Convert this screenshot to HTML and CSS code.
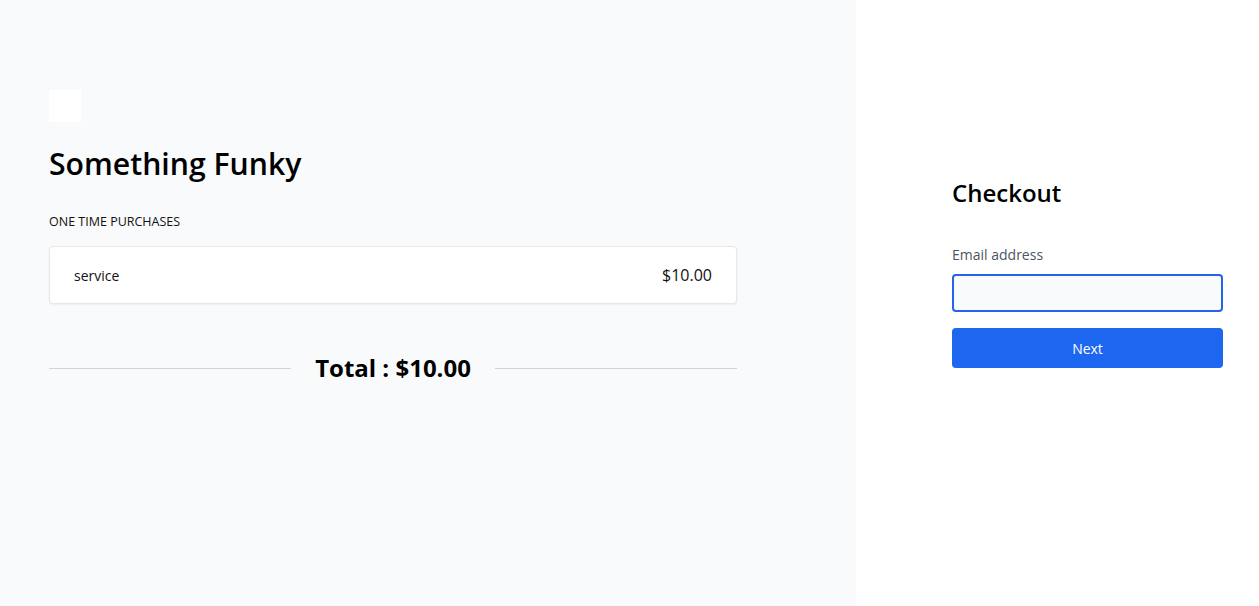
FILE: index.html
```html
<!DOCTYPE html>
<html>
<head>
<meta charset="utf-8">
<link rel="stylesheet" href="styles.css">
</head>
<body>
<div class="page">
  <section class="summary">
    <div class="logo"></div>
    <h1 class="title">Something Funky</h1>
    <div class="section-label">ONE TIME PURCHASES</div>
    <div class="card">
      <span class="item-name">service</span>
      <span class="item-price">$10.00</span>
    </div>
    <div class="total">
      <span class="rule"></span>
      <span class="total-text">Total : $10.00</span>
      <span class="rule"></span>
    </div>
  </section>
  <section class="checkout">
    <div class="form">
      <h2 class="checkout-title">Checkout</h2>
      <label class="field-label" for="email">Email address</label>
      <input id="email" class="field-input" type="email">
      <button class="btn">Next</button>
    </div>
  </section>
</div>
</body>
</html>
```
FILE: styles.css
```css
* { box-sizing: border-box; }
html, body { margin: 0; padding: 0; height: 100%; }
body {
  font-family: "Open Sans", "Noto Sans", sans-serif;
  color: #000;
  background: #fff;
}
.page {
  display: flex;
  height: 606px;
}
.summary {
  width: 856px;
  flex: none;
  background: #f9fafb;
  padding: 90px 0 0 49px;
}
.logo {
  width: 32px;
  height: 32px;
  background: #fff;
}
.title {
  margin: 22px 0 0;
  font-size: 30.2px;
  font-weight: 600;
  line-height: 40px;
}
.section-label {
  margin-top: 30px;
  font-size: 12.5px;
  line-height: 16px;
  color: #111;
}
.card {
  margin-top: 16px;
  width: 688px;
  height: 58px;
  background: #fff;
  border: 1px solid #e5e7eb;
  border-radius: 4px;
  box-shadow: 0 1px 2px rgba(0,0,0,0.05);
  display: flex;
  align-items: center;
  justify-content: space-between;
  padding: 0 24px;
}
.item-name { font-size: 14px; color: #111; }
.item-price { font-size: 16px; color: #111; }
.total {
  margin-top: 48px;
  width: 688px;
  display: flex;
  align-items: center;
  gap: 24px;
}
.rule {
  flex: 1;
  height: 1px;
  background: #d1d5db;
}
.total-text {
  font-size: 24px;
  font-weight: 700;
  line-height: 32px;
}
.checkout {
  flex: 1;
  padding: 177px 36px 0 96px;
}
.form { display: flex; flex-direction: column; }
.checkout-title {
  margin: 0;
  font-size: 24px;
  font-weight: 600;
  line-height: 32px;
}
.field-label {
  margin-top: 36px;
  font-size: 14px;
  line-height: 20px;
  color: #4b5563;
}
.field-input {
  margin-top: 9px;
  height: 38px;
  border: 2px solid #2563eb;
  border-radius: 4px;
  background: #f9fafb;
  outline: none;
  font: inherit;
}
.btn {
  margin-top: 16px;
  height: 40px;
  border: none;
  border-radius: 4px;
  background: #1d66f0;
  color: #fff;
  font-family: inherit;
  font-size: 14px;
}
```
